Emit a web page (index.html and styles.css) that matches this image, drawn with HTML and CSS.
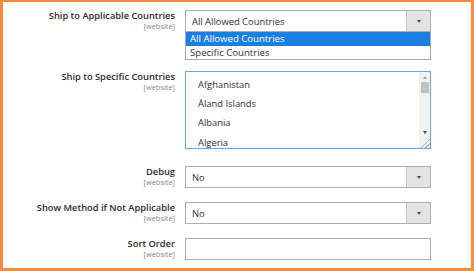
FILE: index.html
```html
<!DOCTYPE html>
<html lang="en">
  <head>
    <meta charset="UTF-8" />
    <title>Shipping Method Settings</title>
    <link rel="stylesheet" href="styles.css">
  </head>
  <body>
    <div class="frame">
      <div class="row row-first">
        <div class="label">
          <span class="name">Ship to Applicable Countries</span>
          <span class="scope">[website]</span>
        </div>
        <div class="control">
          <div class="select">
            <span class="value">All Allowed Countries</span>
            <span class="arrow"></span>
          </div>
          <ul class="menu">
            <li class="active">All Allowed Countries</li>
            <li>Specific Countries</li>
          </ul>
        </div>
      </div>

      <div class="row row-multi">
        <div class="label">
          <span class="name">Ship to Specific Countries</span>
          <span class="scope">[website]</span>
        </div>
        <div class="control">
          <div class="multi">
            <ul class="multi-list">
              <li>Afghanistan</li>
              <li>Åland Islands</li>
              <li>Albania</li>
              <li>Algeria</li>
            </ul>
            <div class="scrollbar">
              <span class="sb-up"></span>
              <span class="sb-thumb"></span>
              <span class="sb-space"></span>
              <span class="sb-down"></span>
              <span class="sb-grip"></span>
            </div>
          </div>
        </div>
      </div>

      <div class="row">
        <div class="label">
          <span class="name">Debug</span>
          <span class="scope">[website]</span>
        </div>
        <div class="control">
          <div class="select">
            <span class="value">No</span>
            <span class="arrow"></span>
          </div>
        </div>
      </div>

      <div class="row">
        <div class="label">
          <span class="name">Show Method if Not Applicable</span>
          <span class="scope">[website]</span>
        </div>
        <div class="control">
          <div class="select">
            <span class="value">No</span>
            <span class="arrow"></span>
          </div>
        </div>
      </div>

      <div class="row">
        <div class="label">
          <span class="name">Sort Order</span>
          <span class="scope">[website]</span>
        </div>
        <div class="control">
          <div class="input"></div>
        </div>
      </div>
    </div>
  </body>
</html>
```

FILE: styles.css
```css
html,
body {
  margin: 0;
  padding: 0;
}
body {
  font-family: "Open Sans", "Noto Sans", sans-serif;
  background: #fff;
  color: #303030;
}
.frame {
  width: 474px;
  height: 271px;
  box-sizing: border-box;
  border: 3px solid #f68b3d;
  border-top-width: 2px;
  padding-top: 8px;
  overflow: hidden;
}
ul {
  list-style: none;
  margin: 0;
  padding: 0;
}
.row {
  display: flex;
  gap: 10px;
  margin-bottom: 14px;
}
.row-first {
  margin-bottom: 11px;
}
.row-multi {
  margin-bottom: 17px;
}
.label {
  width: 172px;
  display: flex;
  flex-direction: column;
  align-items: flex-end;
}
.name {
  font-size: 9.3px;
  font-weight: 600;
  line-height: 12px;
  color: #2b2b2b;
  white-space: nowrap;
}
.scope {
  font-size: 7.4px;
  line-height: 8px;
  color: #8a8a8a;
}
.control {
  width: 246px;
}
.select {
  height: 22px;
  box-sizing: border-box;
  border: 1px solid #adadad;
  display: flex;
  align-items: center;
  font-size: 9.4px;
  color: #303030;
}
.value {
  flex: 1;
  padding-left: 6px;
}
.arrow {
  width: 23px;
  height: 100%;
  background: #e3e3e3;
  border-left: 1px solid #c6c6c6;
  display: flex;
  align-items: center;
  justify-content: center;
}
.arrow::after {
  content: "";
  border-left: 2.5px solid transparent;
  border-right: 2.5px solid transparent;
  border-top: 3px solid #514943;
}
.menu {
  border: 1px solid #a9a9a9;
  border-top: none;
  font-size: 9.6px;
  background: #fff;
}
.menu li {
  padding-left: 4px;
  height: 13px;
  line-height: 13px;
}
.menu .active {
  height: 14px;
  line-height: 14px;
  background: #1a7fe3;
  color: #fff;
}
.multi {
  height: 78px;
  box-sizing: border-box;
  border: 1px solid #6aa6de;
  display: flex;
  overflow: hidden;
}
.multi-list {
  flex: 1;
  padding: 3px 0 0 12px;
  font-size: 9.4px;
  line-height: 19.2px;
}
.scrollbar {
  width: 11px;
  background: #f1f1f1;
  display: flex;
  flex-direction: column;
  align-items: center;
}
.sb-up,
.sb-down {
  width: 11px;
  height: 10px;
  display: flex;
  align-items: center;
  justify-content: center;
}
.sb-up::after {
  content: "";
  border-left: 2px solid transparent;
  border-right: 2px solid transparent;
  border-bottom: 3px solid #a3a3a3;
}
.sb-down::after {
  content: "";
  border-left: 2px solid transparent;
  border-right: 2px solid transparent;
  border-top: 3px solid #505050;
}
.sb-thumb {
  width: 8px;
  height: 11px;
  background: #c1c1c1;
}
.sb-space {
  flex: 1;
}
.sb-grip {
  width: 11px;
  height: 11px;
  background: linear-gradient(135deg, transparent 55%, #b0b0b0 55%, #b0b0b0 62%, transparent 62%, transparent 75%, #b0b0b0 75%, #b0b0b0 82%, transparent 82%);
}
.input {
  height: 22px;
  box-sizing: border-box;
  border: 1px solid #adadad;
}
```
